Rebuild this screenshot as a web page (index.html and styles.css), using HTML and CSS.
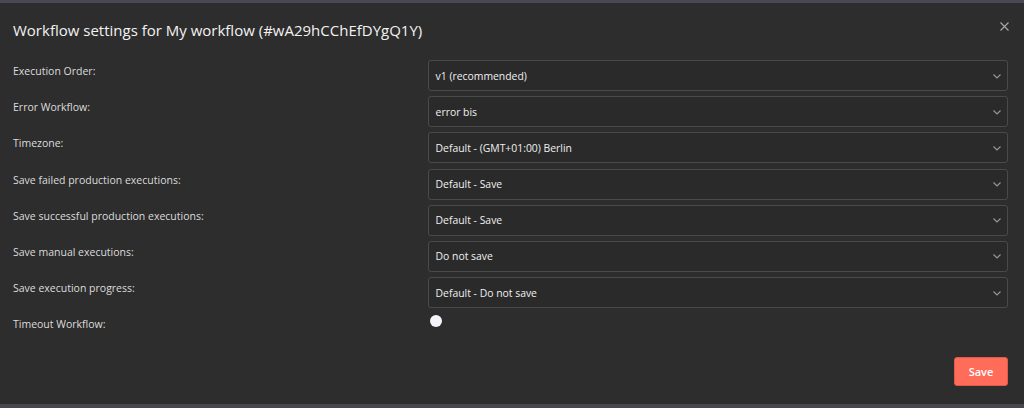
FILE: index.html
```html
<!DOCTYPE html>
<html>
<head>
<meta charset="utf-8">
<link rel="stylesheet" href="styles.css">
</head>
<body>
<div class="topbar"></div>
<div class="dialog">
  <div class="header">
    <h1 class="title">Workflow settings for My workflow (#wA29hCChEfDYgQ1Y)</h1>
    <button class="close" aria-label="Close">
      <svg width="9" height="9" viewBox="0 0 9 9"><path d="M0.5 0.5 L8.5 8.5 M8.5 0.5 L0.5 8.5" stroke="#a9a9a9" stroke-width="1.1" fill="none"/></svg>
    </button>
  </div>
  <div class="form">
    <div class="row"><div class="label">Execution Order:</div><div class="select"><span>v1 (recommended)</span><svg class="chev" width="8" height="5" viewBox="0 0 8 5"><path d="M0.5 0.5 L4 4 L7.5 0.5" stroke="#9a9a9a" stroke-width="1.1" fill="none"/></svg></div></div>
    <div class="row"><div class="label">Error Workflow:</div><div class="select"><span>error bis</span><svg class="chev" width="8" height="5" viewBox="0 0 8 5"><path d="M0.5 0.5 L4 4 L7.5 0.5" stroke="#9a9a9a" stroke-width="1.1" fill="none"/></svg></div></div>
    <div class="row"><div class="label">Timezone:</div><div class="select"><span>Default - (GMT+01:00) Berlin</span><svg class="chev" width="8" height="5" viewBox="0 0 8 5"><path d="M0.5 0.5 L4 4 L7.5 0.5" stroke="#9a9a9a" stroke-width="1.1" fill="none"/></svg></div></div>
    <div class="row"><div class="label">Save failed production executions:</div><div class="select"><span>Default - Save</span><svg class="chev" width="8" height="5" viewBox="0 0 8 5"><path d="M0.5 0.5 L4 4 L7.5 0.5" stroke="#9a9a9a" stroke-width="1.1" fill="none"/></svg></div></div>
    <div class="row"><div class="label">Save successful production executions:</div><div class="select"><span>Default - Save</span><svg class="chev" width="8" height="5" viewBox="0 0 8 5"><path d="M0.5 0.5 L4 4 L7.5 0.5" stroke="#9a9a9a" stroke-width="1.1" fill="none"/></svg></div></div>
    <div class="row"><div class="label">Save manual executions:</div><div class="select"><span>Do not save</span><svg class="chev" width="8" height="5" viewBox="0 0 8 5"><path d="M0.5 0.5 L4 4 L7.5 0.5" stroke="#9a9a9a" stroke-width="1.1" fill="none"/></svg></div></div>
    <div class="row"><div class="label">Save execution progress:</div><div class="select"><span>Default - Do not save</span><svg class="chev" width="8" height="5" viewBox="0 0 8 5"><path d="M0.5 0.5 L4 4 L7.5 0.5" stroke="#9a9a9a" stroke-width="1.1" fill="none"/></svg></div></div>
    <div class="row row-toggle"><div class="label">Timeout Workflow:</div><div class="toggle"><span class="knob"></span></div></div>
  </div>
  <div class="footer"><button class="save">Save</button></div>
</div>
<div class="bottombar"></div>
</body>
</html>
```
FILE: styles.css
```css
* { box-sizing: border-box; }
html, body { margin: 0; padding: 0; }
body {
  width: 1024px;
  height: 408px;
  overflow: hidden;
  background: #2d2d2d;
  font-family: "Open Sans", "Liberation Sans", sans-serif;
  color: #e6e6e6;
}
.topbar { height: 3px; background: #4a4854; }
.bottombar { height: 4px; background: #47464d; }
.dialog {
  height: 401px;
  background: #2d2d2d;
  padding: 0 16px 0 13px;
  display: flex;
  flex-direction: column;
}
.header {
  display: flex;
  align-items: center;
  justify-content: space-between;
  height: 54px;
  padding-bottom: 1px;
}
.title {
  margin: 0;
  font-size: 15px;
  font-weight: 400;
  color: #f2f2f2;
  letter-spacing: 0;
}
.close {
  background: none;
  border: 0;
  padding: 0;
  margin-right: -1px;
  margin-top: -7px;
  display: flex;
}
.form { display: flex; flex-direction: column; padding-top: 3px; }
.row {
  display: grid;
  grid-template-columns: 10fr 14fr;
  height: 36.2px;
}
.label {
  font-size: 10.5px;
  color: #dcdcdc;
  padding-top: 4px;
}
.select {
  height: 31px;
  border: 1px solid #4a4a4a;
  border-radius: 3px;
  background: #2a2a2a;
  display: flex;
  align-items: center;
  justify-content: space-between;
  padding: 0 6px 0 7px;
  font-size: 10.4px;
  color: #f0f0f0;
}
.chev { margin-top: 1px; }
.toggle {
  padding-top: 2px;
  padding-left: 2px;
}
.knob {
  display: block;
  width: 12px;
  height: 12px;
  border-radius: 50%;
  background: #f4f4fa;
}
.footer {
  margin-top: auto;
  display: flex;
  justify-content: flex-end;
  padding-bottom: 18px;
}
.save {
  width: 54px;
  height: 29px;
  background: #ff6d5a;
  color: #fff;
  border: 1px solid #e05a48;
  border-radius: 3px;
  font-family: "Open Sans", "Liberation Sans", sans-serif;
  font-size: 11px;
  font-weight: 600;
  padding: 0;
}
```
